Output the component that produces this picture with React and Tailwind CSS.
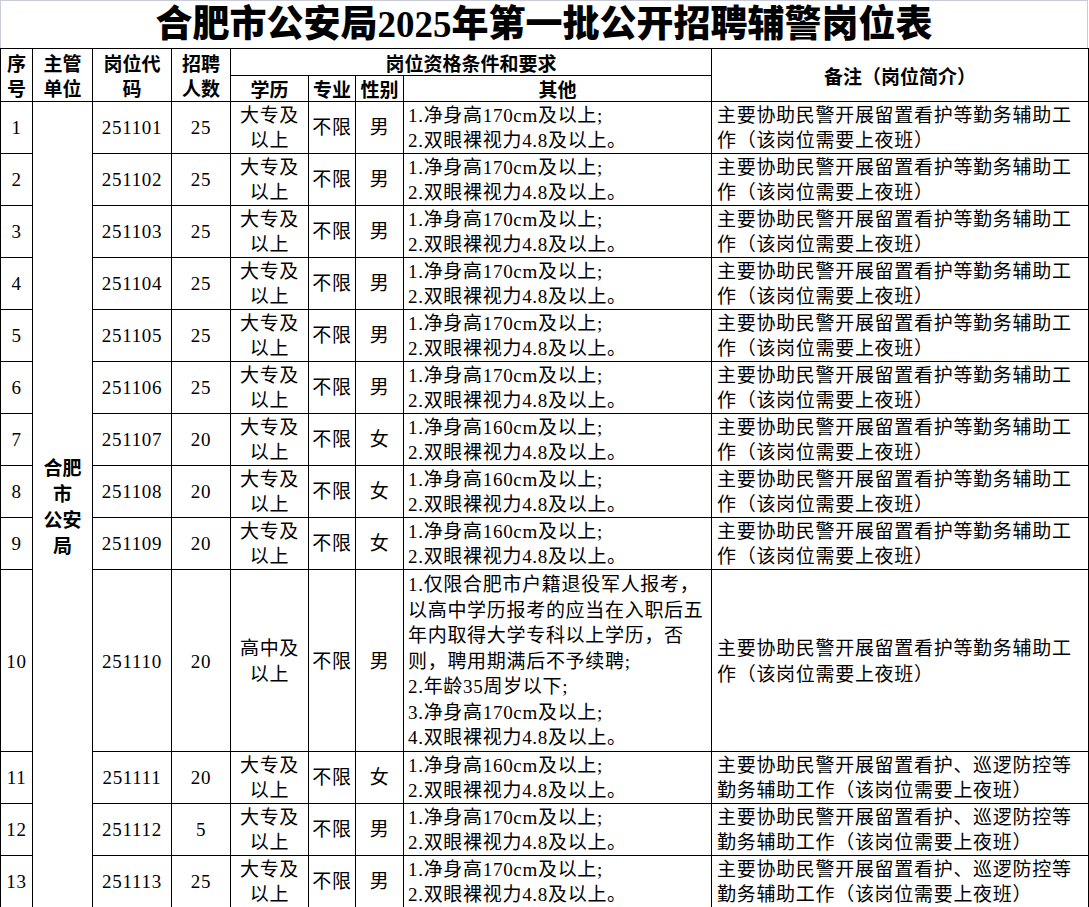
import React from "react";

const REM_A = ["主要协助民警开展留置看护等勤务辅助工", "作（该岗位需要上夜班）"];
const REM_B = ["主要协助民警开展留置看护、巡逻防控等", "勤务辅助工作（该岗位需要上夜班）"];

const other = (h) => [`1.净身高${h}cm及以上;`, "2.双眼裸视力4.8及以上。"];

const rows = [
  { n: 1, code: "251101", cnt: "25", edu: ["大专及", "以上"], sex: "男", other: other(170), rem: REM_A },
  { n: 2, code: "251102", cnt: "25", edu: ["大专及", "以上"], sex: "男", other: other(170), rem: REM_A },
  { n: 3, code: "251103", cnt: "25", edu: ["大专及", "以上"], sex: "男", other: other(170), rem: REM_A },
  { n: 4, code: "251104", cnt: "25", edu: ["大专及", "以上"], sex: "男", other: other(170), rem: REM_A },
  { n: 5, code: "251105", cnt: "25", edu: ["大专及", "以上"], sex: "男", other: other(170), rem: REM_A },
  { n: 6, code: "251106", cnt: "25", edu: ["大专及", "以上"], sex: "男", other: other(170), rem: REM_A },
  { n: 7, code: "251107", cnt: "20", edu: ["大专及", "以上"], sex: "女", other: other(160), rem: REM_A },
  { n: 8, code: "251108", cnt: "20", edu: ["大专及", "以上"], sex: "女", other: other(160), rem: REM_A },
  { n: 9, code: "251109", cnt: "20", edu: ["大专及", "以上"], sex: "女", other: other(160), rem: REM_A },
  {
    n: 10,
    code: "251110",
    cnt: "20",
    edu: ["高中及", "以上"],
    sex: "男",
    tall: true,
    other: [
      "1.仅限合肥市户籍退役军人报考，",
      "以高中学历报考的应当在入职后五",
      "年内取得大学专科以上学历，否",
      "则，聘用期满后不予续聘;",
      "2.年龄35周岁以下;",
      "3.净身高170cm及以上;",
      "4.双眼裸视力4.8及以上。",
    ],
    rem: REM_A,
  },
  { n: 11, code: "251111", cnt: "20", edu: ["大专及", "以上"], sex: "女", other: other(160), rem: REM_B },
  { n: 12, code: "251112", cnt: "5", edu: ["大专及", "以上"], sex: "男", other: other(170), rem: REM_B },
  { n: 13, code: "251113", cnt: "25", edu: ["大专及", "以上"], sex: "男", other: other(170), rem: REM_B },
];

const Lines = ({ lines }) => (
  <>
    {lines.map((l, i) => (
      <div key={i} className="whitespace-nowrap">
        {l}
      </div>
    ))}
  </>
);

export default function App() {
  const th = "border border-black p-0 text-center align-middle font-bold leading-[25px]";
  const td = "border border-black p-0 pt-[2px] align-middle";
  return (
    <div className="w-[1089px] h-[907px] bg-white overflow-hidden text-black">
      <div className="h-[48px] w-[1088px] border-t border-l border-r border-[#c9cbd7] flex items-center justify-center">
        <div className="font-['Liberation_Serif','Noto_Sans_CJK_SC',serif] font-black text-[37px] leading-none">
          合肥市公安局2025年第一批公开招聘辅警岗位表
        </div>
      </div>
      <table className="table-fixed border-collapse w-[1088px] font-['Liberation_Serif','Noto_Sans_CJK_SC',serif] text-[19px] tracking-[0.7px]">
        <colgroup>
          <col className="w-[32px]" />
          <col className="w-[60px]" />
          <col className="w-[79px]" />
          <col className="w-[59px]" />
          <col className="w-[78px]" />
          <col className="w-[47px]" />
          <col className="w-[48px]" />
          <col className="w-[308px]" />
          <col className="w-[377px]" />
        </colgroup>
        <thead className="font-['Noto_Sans_CJK_SC',sans-serif] text-[19px] tracking-normal">
          <tr className="h-[27px]">
            <th rowSpan={2} className={th}>
              <div>序</div>
              <div>号</div>
            </th>
            <th rowSpan={2} className={th}>
              <div>主管</div>
              <div>单位</div>
            </th>
            <th rowSpan={2} className={th}>
              <div>岗位代</div>
              <div>码</div>
            </th>
            <th rowSpan={2} className={th}>
              <div>招聘</div>
              <div>人数</div>
            </th>
            <th colSpan={4} className={th}>
              岗位资格条件和要求
            </th>
            <th rowSpan={2} className={th}>
              备注（岗位简介）
            </th>
          </tr>
          <tr className="h-[25px]">
            <th className={th}>学历</th>
            <th className={th}>专业</th>
            <th className={th}>性别</th>
            <th className={th}>其他</th>
          </tr>
        </thead>
        <tbody>
          {rows.map((r, idx) => {
            const lh = r.tall ? "leading-[25.5px]" : "leading-[24.5px]";
            const c = `${td} ${lh}`;
            return (
              <tr key={r.n} className={r.tall ? "h-[182px]" : "h-[52px]"}>
                <td className={`${c} text-center`}>{r.n}</td>
                {idx === 0 && (
                  <td
                    rowSpan={13}
                    className={`${td} leading-[26px] text-center font-['Noto_Sans_CJK_SC',sans-serif] font-bold tracking-normal`}
                  >
                    <div>合肥</div>
                    <div>市</div>
                    <div>公安</div>
                    <div>局</div>
                  </td>
                )}
                <td className={`${c} text-center`}>{r.code}</td>
                <td className={`${c} text-center`}>{r.cnt}</td>
                <td className={`${c} text-center`}>
                  <Lines lines={r.edu} />
                </td>
                <td className={`${c} text-center`}>不限</td>
                <td className={`${c} text-center`}>{r.sex}</td>
                <td className={`${c} text-left pl-[4px]`}>
                  <Lines lines={r.other} />
                </td>
                <td className={`${c} text-left pl-[5px]`}>
                  <Lines lines={r.rem} />
                </td>
              </tr>
            );
          })}
        </tbody>
      </table>
    </div>
  );
}
